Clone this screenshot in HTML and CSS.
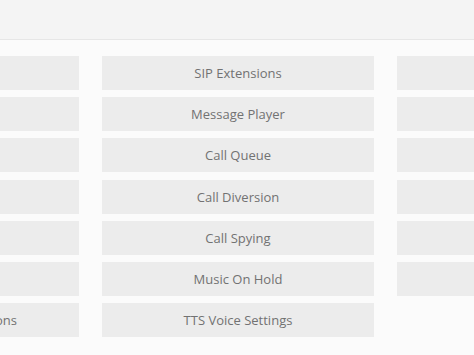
FILE: index.html
```html
<!DOCTYPE html>
<html>
<head>
<meta charset="utf-8">
<link rel="stylesheet" href="styles.css">
</head>
<body>
<header class="topbar"></header>
<main class="menu">
  <div class="col">
    <a class="item">Extensions</a>
    <a class="item">Voicemail</a>
    <a class="item">Ring Groups</a>
    <a class="item">Conferences</a>
    <a class="item">IVR Menu</a>
    <a class="item">Time Conditions</a>
    <a class="item">Missed Call Notifications</a>
  </div>
  <div class="col">
    <a class="item">SIP Extensions</a>
    <a class="item">Message Player</a>
    <a class="item">Call Queue</a>
    <a class="item">Call Diversion</a>
    <a class="item">Call Spying</a>
    <a class="item">Music On Hold</a>
    <a class="item">TTS Voice Settings</a>
  </div>
  <div class="col">
    <a class="item">Trunks</a>
    <a class="item">Outbound Routes</a>
    <a class="item">Inbound Routes</a>
    <a class="item">Call Recording</a>
    <a class="item">Speed Dial</a>
    <a class="item">Blacklist</a>
  </div>
</main>
</body>
</html>
```

FILE: styles.css
```css
html, body {
  margin: 0;
  padding: 0;
}
body {
  background: #fbfbfb;
  font-family: "Open Sans", "Noto Sans", sans-serif;
  overflow: hidden;
  width: 474px;
  height: 355px;
}
.topbar {
  height: 39px;
  background: #f4f4f4;
  border-bottom: 1px solid #e6e6e6;
}
.menu {
  display: flex;
  gap: 23px;
  margin-top: 16px;
  margin-left: -193px;
}
.col {
  display: flex;
  flex-direction: column;
  gap: 7.2px;
  width: 272px;
  flex: 0 0 272px;
}
.item {
  display: flex;
  align-items: center;
  justify-content: center;
  height: 34px;
  background: #ececec;
  color: #727272;
  font-size: 13px;
  white-space: nowrap;
}
```
